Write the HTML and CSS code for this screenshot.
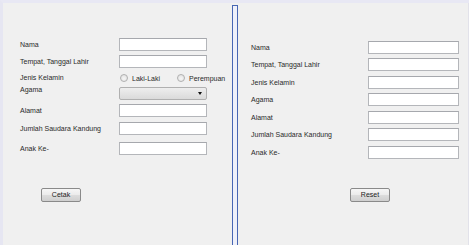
FILE: index.html
```html
<!DOCTYPE html>
<html>
<head>
<meta charset="utf-8">
<link rel="stylesheet" href="styles.css">
</head>
<body>
<div class="window">
  <div class="panel panel-left">
    <div class="form form-left">
      <div class="label">Nama</div>
      <div class="input"></div>
      <div class="label">Tempat, Tanggal Lahir</div>
      <div class="input"></div>
      <div class="label label-radio">Jenis Kelamin</div>
      <div class="radios">
        <span class="radio"></span><span class="radio-text">Laki-Laki</span>
        <span class="radio radio-second"></span><span class="radio-text">Perempuan</span>
      </div>
      <div class="label label-up">Agama</div>
      <div class="combo"><span class="arrow"></span></div>
      <div class="label">Alamat</div>
      <div class="input"></div>
      <div class="label">Jumlah Saudara Kandung</div>
      <div class="input"></div>
      <div class="label">Anak Ke-</div>
      <div class="input"></div>
    </div>
    <div class="button btn-cetak">Cetak</div>
  </div>
  <div class="divider"></div>
  <div class="panel panel-right">
    <div class="form form-right">
      <div class="label">Nama</div>
      <div class="input"></div>
      <div class="label">Tempat, Tanggal Lahir</div>
      <div class="input"></div>
      <div class="label">Jenis Kelamin</div>
      <div class="input"></div>
      <div class="label">Agama</div>
      <div class="input"></div>
      <div class="label">Alamat</div>
      <div class="input"></div>
      <div class="label">Jumlah Saudara Kandung</div>
      <div class="input"></div>
      <div class="label">Anak Ke-</div>
      <div class="input"></div>
    </div>
    <div class="button btn-reset">Reset</div>
  </div>
</div>
</body>
</html>
```
FILE: styles.css
```css
html, body {
  margin: 0;
  padding: 0;
}
body {
  width: 469px;
  height: 245px;
  overflow: hidden;
  background: #f0f0f0;
  font-family: "Liberation Sans", Arial, sans-serif;
  font-size: 7px;
  color: #2a2a2a;
}
.window {
  display: flex;
  height: 245px;
  box-sizing: border-box;
  border-top: 3px solid #e8e8f4;
  border-left: 3px solid #e6e6f2;
}
.panel {
  box-sizing: border-box;
}
.panel-left {
  width: 229px;
  padding-top: 35px;
  padding-left: 17px;
}
.panel-right {
  flex: 1;
  padding-top: 37.5px;
  padding-left: 13px;
  border-right: 1px solid #e2e2ea;
}
.divider {
  width: 6px;
  margin-top: 2px;
  box-sizing: border-box;
  border: 1px solid #4766b4;
  border-bottom: none;
  background: #eef0fa;
}
.form {
  display: grid;
  align-items: start;
}
.form-left {
  grid-template-columns: 99px 88px;
  grid-template-rows: 17px 16px 16px 17px 18px 20px 13px;
}
.form-right {
  grid-template-columns: 117px 91px;
  grid-auto-rows: 13px;
  row-gap: 4.5px;
}
.label {
  height: 13px;
  line-height: 13px;
  white-space: nowrap;
}
.label-radio {
  height: 14px;
  line-height: 14px;
}
.label-up {
  margin-top: -4px;
}
.input {
  height: 13px;
  box-sizing: border-box;
  background: #fff;
  border: 1px solid #b4b6ba;
  border-top-color: #a6a8ad;
}
.radios {
  display: flex;
  align-items: center;
  height: 14px;
  white-space: nowrap;
}
.radio {
  flex: 0 0 auto;
  width: 8px;
  height: 8px;
  box-sizing: border-box;
  border-radius: 50%;
  border: 1px solid #b0b0b0;
  background: radial-gradient(circle at 50% 60%, #f6f6f6 0%, #dedede 100%);
  margin-left: 1px;
  margin-right: 4px;
}
.radio-text {
  flex: 0 0 auto;
}
.radio-second {
  margin-left: 17px;
}
.combo {
  height: 13px;
  box-sizing: border-box;
  border: 1px solid #b0b0b0;
  border-radius: 2px;
  background: linear-gradient(#eeeeee, #dadada);
  position: relative;
}
.arrow {
  position: absolute;
  right: 4px;
  top: 4px;
  width: 0;
  height: 0;
  border-left: 2.5px solid transparent;
  border-right: 2.5px solid transparent;
  border-top: 3px solid #111;
}
.button {
  width: 40px;
  height: 14px;
  box-sizing: border-box;
  border: 1px solid #8a8a8a;
  border-radius: 2px;
  background: linear-gradient(#f6f6f6 0%, #ebebeb 50%, #dddddd 51%, #cfcfcf 100%);
  text-align: center;
  line-height: 12px;
  color: #222;
}
.btn-cetak {
  margin-top: 33px;
  margin-left: 21px;
}
.btn-reset {
  margin-top: 29.5px;
  margin-left: 99px;
}
```
